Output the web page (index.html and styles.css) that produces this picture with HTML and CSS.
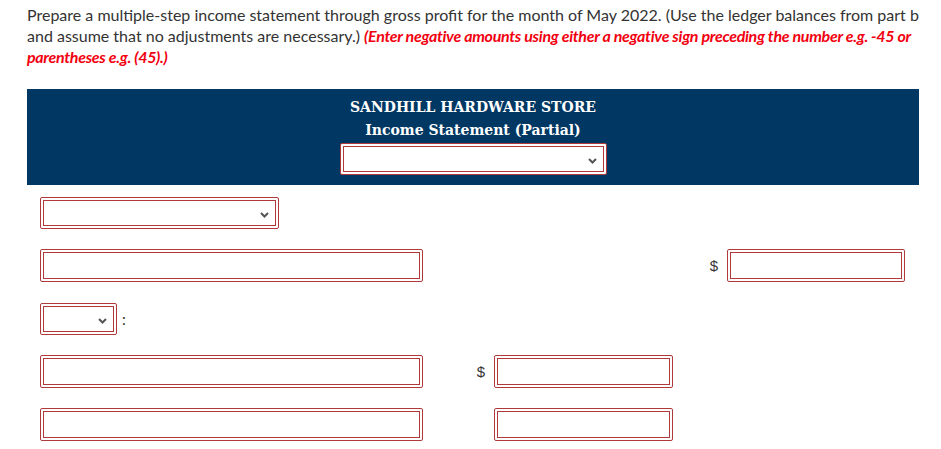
FILE: index.html
```html
<!DOCTYPE html>
<html>
<head>
<meta charset="utf-8">
<link rel="stylesheet" href="styles.css">
</head>
<body>
<div class="page">
  <p class="intro">Prepare a multiple-step income statement through gross profit for the month of May 2022. (Use the ledger balances from part b and assume that no adjustments are necessary.) <em class="hint">(Enter negative amounts using either a negative sign preceding the number e.g. -45 or parentheses e.g. (45).)</em></p>

  <div class="sheet">
    <div class="head">
      <div class="title">SANDHILL HARDWARE STORE</div>
      <div class="title">Income Statement (Partial)</div>
      <div class="field sel head-sel">
        <select></select>
        <svg class="chev" width="9" height="6" viewBox="0 0 9 6"><path d="M1 1 L4.5 4.5 L8 1" fill="none" stroke="#555" stroke-width="2"/></svg>
      </div>
    </div>

    <div class="rows">
      <div class="row">
        <div class="c1"><div class="field sel sel-wide"><select></select><svg class="chev" width="9" height="6" viewBox="0 0 9 6"><path d="M1 1 L4.5 4.5 L8 1" fill="none" stroke="#555" stroke-width="2"/></svg></div></div>
      </div>
      <div class="row">
        <div class="c1"><div class="field txt"><input type="text"></div></div>
        <div class="c2"></div>
        <div class="c3"></div>
        <div class="c4 cur">$</div>
        <div class="c5"><div class="field txt"><input type="text"></div></div>
      </div>
      <div class="row">
        <div class="c1 inline"><div class="field sel sel-small"><select></select><svg class="chev" width="9" height="6" viewBox="0 0 9 6"><path d="M1 1 L4.5 4.5 L8 1" fill="none" stroke="#555" stroke-width="2"/></svg></div><span class="colon">:</span></div>
      </div>
      <div class="row">
        <div class="c1"><div class="field txt"><input type="text"></div></div>
        <div class="c2 cur">$</div>
        <div class="c3"><div class="field txt"><input type="text"></div></div>
      </div>
      <div class="row">
        <div class="c1"><div class="field txt"><input type="text"></div></div>
        <div class="c2"></div>
        <div class="c3"><div class="field txt"><input type="text"></div></div>
      </div>
    </div>
  </div>
</div>
</body>
</html>
```

FILE: styles.css
```css
html, body {
  margin: 0;
  padding: 0;
  background: #fff;
}

.page {
  padding: 4px 22px 0 27px;
  font-family: Lato, "Liberation Sans", sans-serif;
  color: #333;
}

.intro {
  margin: 0;
  font-size: 16px;
  line-height: 21px;
}

.hint {
  color: #f2000f;
  font-weight: bold;
  font-style: italic;
  letter-spacing: -0.3px;
}

.sheet {
  margin-top: 22px;
  width: 892px;
}

.head {
  background: #003763;
  padding: 7px 0 10px;
  display: flex;
  flex-direction: column;
  align-items: center;
}

.title {
  color: #fff;
  font-family: "DejaVu Serif", serif;
  font-weight: bold;
  font-size: 14px;
  line-height: 23px;
  letter-spacing: 0;
}

.field {
  position: relative;
  border: 1px solid #b03a3a;
  border-radius: 2px;
  padding: 2px;
  background: #fff;
  box-sizing: border-box;
}

.field input,
.field select {
  display: block;
  box-sizing: border-box;
  width: 100%;
  margin: 0;
  border: 1px solid #b03a3a;
  border-radius: 0;
  background: #fff;
  outline: none;
  -webkit-appearance: none;
  appearance: none;
  font: inherit;
  padding: 0 4px;
}

.sel select { height: 26px; }
.txt input { height: 27px; }

.chev {
  position: absolute;
  right: 9px;
  top: 14px;
  pointer-events: none;
}

.head-sel {
  width: 267px;
  margin-top: 1px;
}

.rows {
  padding: 11px 0 0 13px;
  display: flex;
  flex-direction: column;
  gap: 20px;
}

.row {
  display: grid;
  grid-template-columns: 383px 71px 179px 54px 178px;
  align-items: center;
  height: 33px;
}

.sel-wide { width: 239px; }
.sel-small { width: 77px; }

.inline {
  display: flex;
  align-items: center;
}

.colon {
  margin-left: 5px;
  font-size: 15px;
  color: #333;
}

.cur {
  text-align: right;
  padding-right: 9px;
  font-size: 15px;
  color: #333;
  font-family: "Liberation Sans", sans-serif;
}
```
